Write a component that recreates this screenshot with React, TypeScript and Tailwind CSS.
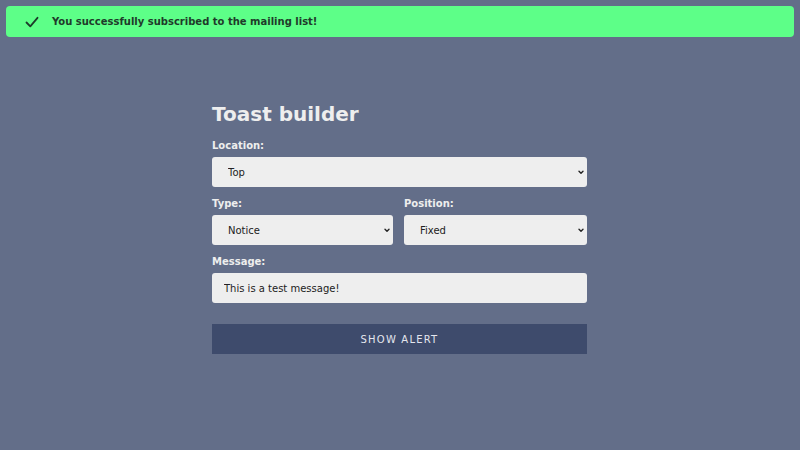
import React from "react";

const font = { fontFamily: '"DejaVu Sans", sans-serif' };

function Check() {
  return (
    <svg width="14" height="12" viewBox="0 0 14 12" fill="none" stroke="#1d3b2a" strokeWidth="1.8" strokeLinecap="round" strokeLinejoin="round">
      <path d="M1.5 6.5l3.8 3.8L12.5 1.8" />
    </svg>
  );
}

function Select({ value, options }: { value: string; options: string[] }) {
  return (
    <div className="relative mt-[4px]">
      <select
        defaultValue={value}
        className="w-full h-[30px] appearance-none rounded-[3px] bg-[#eeeeee] pl-[16px] text-[10px] text-[#222]"
        style={font}
      >
        {options.map((o) => (
          <option key={o}>{o}</option>
        ))}
      </select>
      <svg className="pointer-events-none absolute right-[3px] top-[13px]" width="6" height="5" viewBox="0 0 6 5" fill="none" stroke="#222" strokeWidth="1.4" strokeLinecap="round" strokeLinejoin="round">
        <path d="M1 1.2l2 2 2-2" />
      </svg>
    </div>
  );
}

function Label({ children, className = "" }: { children: React.ReactNode; className?: string }) {
  return <label className={`text-[10px] font-bold text-[#eeeeee] leading-[14px] ${className}`}>{children}</label>;
}

export default function App() {
  return (
    <div className="min-h-[450px] w-full bg-[#636e89] pt-[6px]" style={font}>
      <div className="mx-[6px] h-[31px] rounded-[4px] bg-[#5dff88] flex items-center pl-[19px] gap-[13px]">
        <Check />
        <span className="text-[10px] font-bold text-[#1f3a2a]">You successfully subscribed to the mailing list!</span>
      </div>

      <div className="ml-[212px] w-[375px] mt-[65px] flex flex-col">
        <h1 className="text-[20px] font-bold text-[#eeeeee] leading-[24px]">Toast builder</h1>

        <Label className="mt-[13px]">Location:</Label>
        <Select value="Top" options={["Top", "Bottom"]} />

        <div className="mt-[10px] grid grid-cols-[181px_1fr] gap-[11px]">
          <div className="flex flex-col">
            <Label>Type:</Label>
            <Select value="Notice" options={["Notice", "Warning", "Error"]} />
          </div>
          <div className="flex flex-col">
            <Label>Position:</Label>
            <Select value="Fixed" options={["Fixed", "Static"]} />
          </div>
        </div>

        <Label className="mt-[10px]">Message:</Label>
        <input
          defaultValue="This is a test message!"
          className="mt-[4px] h-[30px] rounded-[3px] bg-[#eeeeee] px-3 text-[10px] text-[#222]"
          style={font}
        />

        <button className="mt-[21px] h-[30px] bg-[#3e4b6c] text-[10px] tracking-[1.2px] text-[#e4e6ee]" style={font}>
          SHOW ALERT
        </button>
      </div>
    </div>
  );
}
